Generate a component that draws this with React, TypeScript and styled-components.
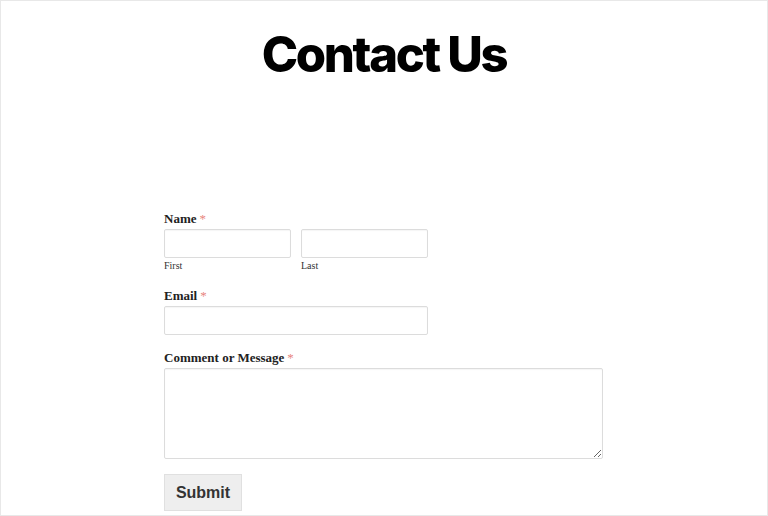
import styled, { createGlobalStyle } from "styled-components";

const GlobalStyle = createGlobalStyle`
    html, body {
        margin: 0;
        padding: 0;
        background: #ffffff;
    }
    * {
        box-sizing: border-box;
    }
`;

const Page = styled.div`
    width: 768px;
    height: 516px;
    border: 1px solid #e8e8e8;
    overflow: hidden;
    display: flex;
    flex-direction: column;
    align-items: center;
`;

const Title = styled.h1`
    margin: 26px 0 0;
    font-family: Inter, "Liberation Sans", sans-serif;
    font-weight: 800;
    font-size: 49px;
    line-height: 56px;
    letter-spacing: -0.048em;
    color: #000;
`;

const Form = styled.form`
    width: 440px;
    margin-top: 128px;
    display: flex;
    flex-direction: column;
    gap: 15px;
`;

const Field = styled.div`
    display: flex;
    flex-direction: column;
`;

const Label = styled.label`
    font-family: "Liberation Serif", serif;
    font-weight: 700;
    font-size: 13px;
    line-height: 16px;
    color: #222;
    margin-bottom: 2px;
`;

const Required = styled.span`
    color: #e8857d;
    font-weight: 400;
    margin-left: 3px;
`;

const Row = styled.div`
    display: flex;
    gap: 10px;
`;

const SubField = styled.div`
    display: flex;
    flex-direction: column;
    width: 127px;
`;

const Input = styled.input<{ $width?: number }>`
    width: ${(p) => (p.$width ? `${p.$width}px` : "100%")};
    height: 29px;
    border: 1px solid #dcdcdc;
    border-radius: 2px;
    background: #fff;
    box-shadow: inset 0 1px 1px rgba(0, 0, 0, 0.04);
    padding: 4px 6px;
    font-size: 13px;
`;

const SubLabel = styled.span`
    font-family: "Liberation Serif", serif;
    font-size: 10px;
    line-height: 14px;
    color: #333;
    margin-top: 1px;
`;

const TextArea = styled.textarea`
    width: 439px;
    height: 91px;
    border: 1px solid #dcdcdc;
    border-radius: 2px;
    background: #fff;
    box-shadow: inset 0 1px 1px rgba(0, 0, 0, 0.04);
    resize: both;
    padding: 6px;
    display: block;
`;

const Submit = styled.button`
    align-self: flex-start;
    width: 78px;
    height: 37px;
    background: #eeeeee;
    border: 1px solid #e0e0e0;
    border-radius: 0;
    font-family: "Liberation Sans", Arial, sans-serif;
    font-weight: 700;
    font-size: 16px;
    color: #333;
    padding: 0;
`;

export default function App() {
    return (
        <>
            <GlobalStyle />
            <Page>
                <Title>Contact Us</Title>
                <Form onSubmit={(e) => e.preventDefault()}>
                    <Field>
                        <Label>Name<Required>*</Required></Label>
                        <Row>
                            <SubField>
                                <Input type="text" />
                                <SubLabel>First</SubLabel>
                            </SubField>
                            <SubField>
                                <Input type="text" />
                                <SubLabel>Last</SubLabel>
                            </SubField>
                        </Row>
                    </Field>
                    <Field>
                        <Label>Email<Required>*</Required></Label>
                        <Input type="email" $width={264} />
                    </Field>
                    <Field>
                        <Label>Comment or Message<Required>*</Required></Label>
                        <TextArea />
                    </Field>
                    <Submit type="submit">Submit</Submit>
                </Form>
            </Page>
        </>
    );
}
